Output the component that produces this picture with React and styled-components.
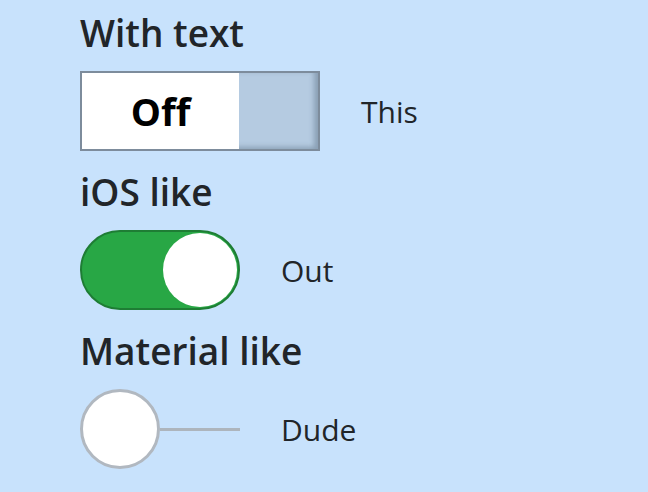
import styled, { createGlobalStyle } from "styled-components";

const GlobalStyle = createGlobalStyle`
  body {
    margin: 0;
    background: #c8e2fc;
    font-family: "Open Sans", "Noto Sans", sans-serif;
    color: #212529;
  }
`;

const Page = styled.div`
  padding: 9px 0 0 80px;
  min-height: 480px;
`;

const Section = styled.section`
  margin-bottom: 17px;
`;

const Heading = styled.h2`
  margin: 0 0 14px 0;
  font-size: 37px;
  line-height: 48px;
  font-weight: 600;
  color: #212529;
`;

const Row = styled.div`
  display: flex;
  align-items: center;
  gap: 41px;
`;

const Label = styled.span`
  font-size: 30px;
  color: #212529;
`;

const TextSwitch = styled.div`
  display: flex;
  width: 240px;
  height: 80px;
  box-sizing: border-box;
  border: 2px solid #7d8c9c;
  background: #b5cbe1;
  box-shadow: inset -4px -2px 5px rgba(60, 80, 100, 0.35);
`;

const TextSide = styled.div`
  width: 157px;
  display: flex;
  align-items: center;
  justify-content: center;
  background: #fff;
  font-size: 38px;
  font-weight: 700;
  color: #000;
`;

const Pill = styled.div`
  width: 160px;
  height: 80px;
  box-sizing: border-box;
  border: 2px solid #1e7d34;
  border-radius: 40px;
  background: #28a745;
  display: flex;
  align-items: center;
  justify-content: ${(p) => (p.$on ? "flex-end" : "flex-start")};
  padding: 0 1px;
`;

const Knob = styled.div`
  width: 74px;
  height: 74px;
  border-radius: 50%;
  background: #fff;
`;

const Material = styled.div`
  width: 160px;
  height: 80px;
  display: flex;
  align-items: center;
`;

const Thumb = styled.div`
  width: 80px;
  height: 80px;
  box-sizing: border-box;
  border-radius: 50%;
  border: 3px solid #b1b8c0;
  background: #fff;
`;

const Track = styled.div`
  flex: 1;
  height: 3px;
  background: #adb5bd;
`;

export default function App() {
  return (
    <>
      <GlobalStyle />
      <Page>
        <Section>
          <Heading>With text</Heading>
          <Row>
            <TextSwitch>
              <TextSide>Off</TextSide>
            </TextSwitch>
            <Label>This</Label>
          </Row>
        </Section>
        <Section>
          <Heading>iOS like</Heading>
          <Row>
            <Pill $on>
              <Knob />
            </Pill>
            <Label>Out</Label>
          </Row>
        </Section>
        <Section>
          <Heading>Material like</Heading>
          <Row>
            <Material>
              <Thumb />
              <Track />
            </Material>
            <Label>Dude</Label>
          </Row>
        </Section>
      </Page>
    </>
  );
}
